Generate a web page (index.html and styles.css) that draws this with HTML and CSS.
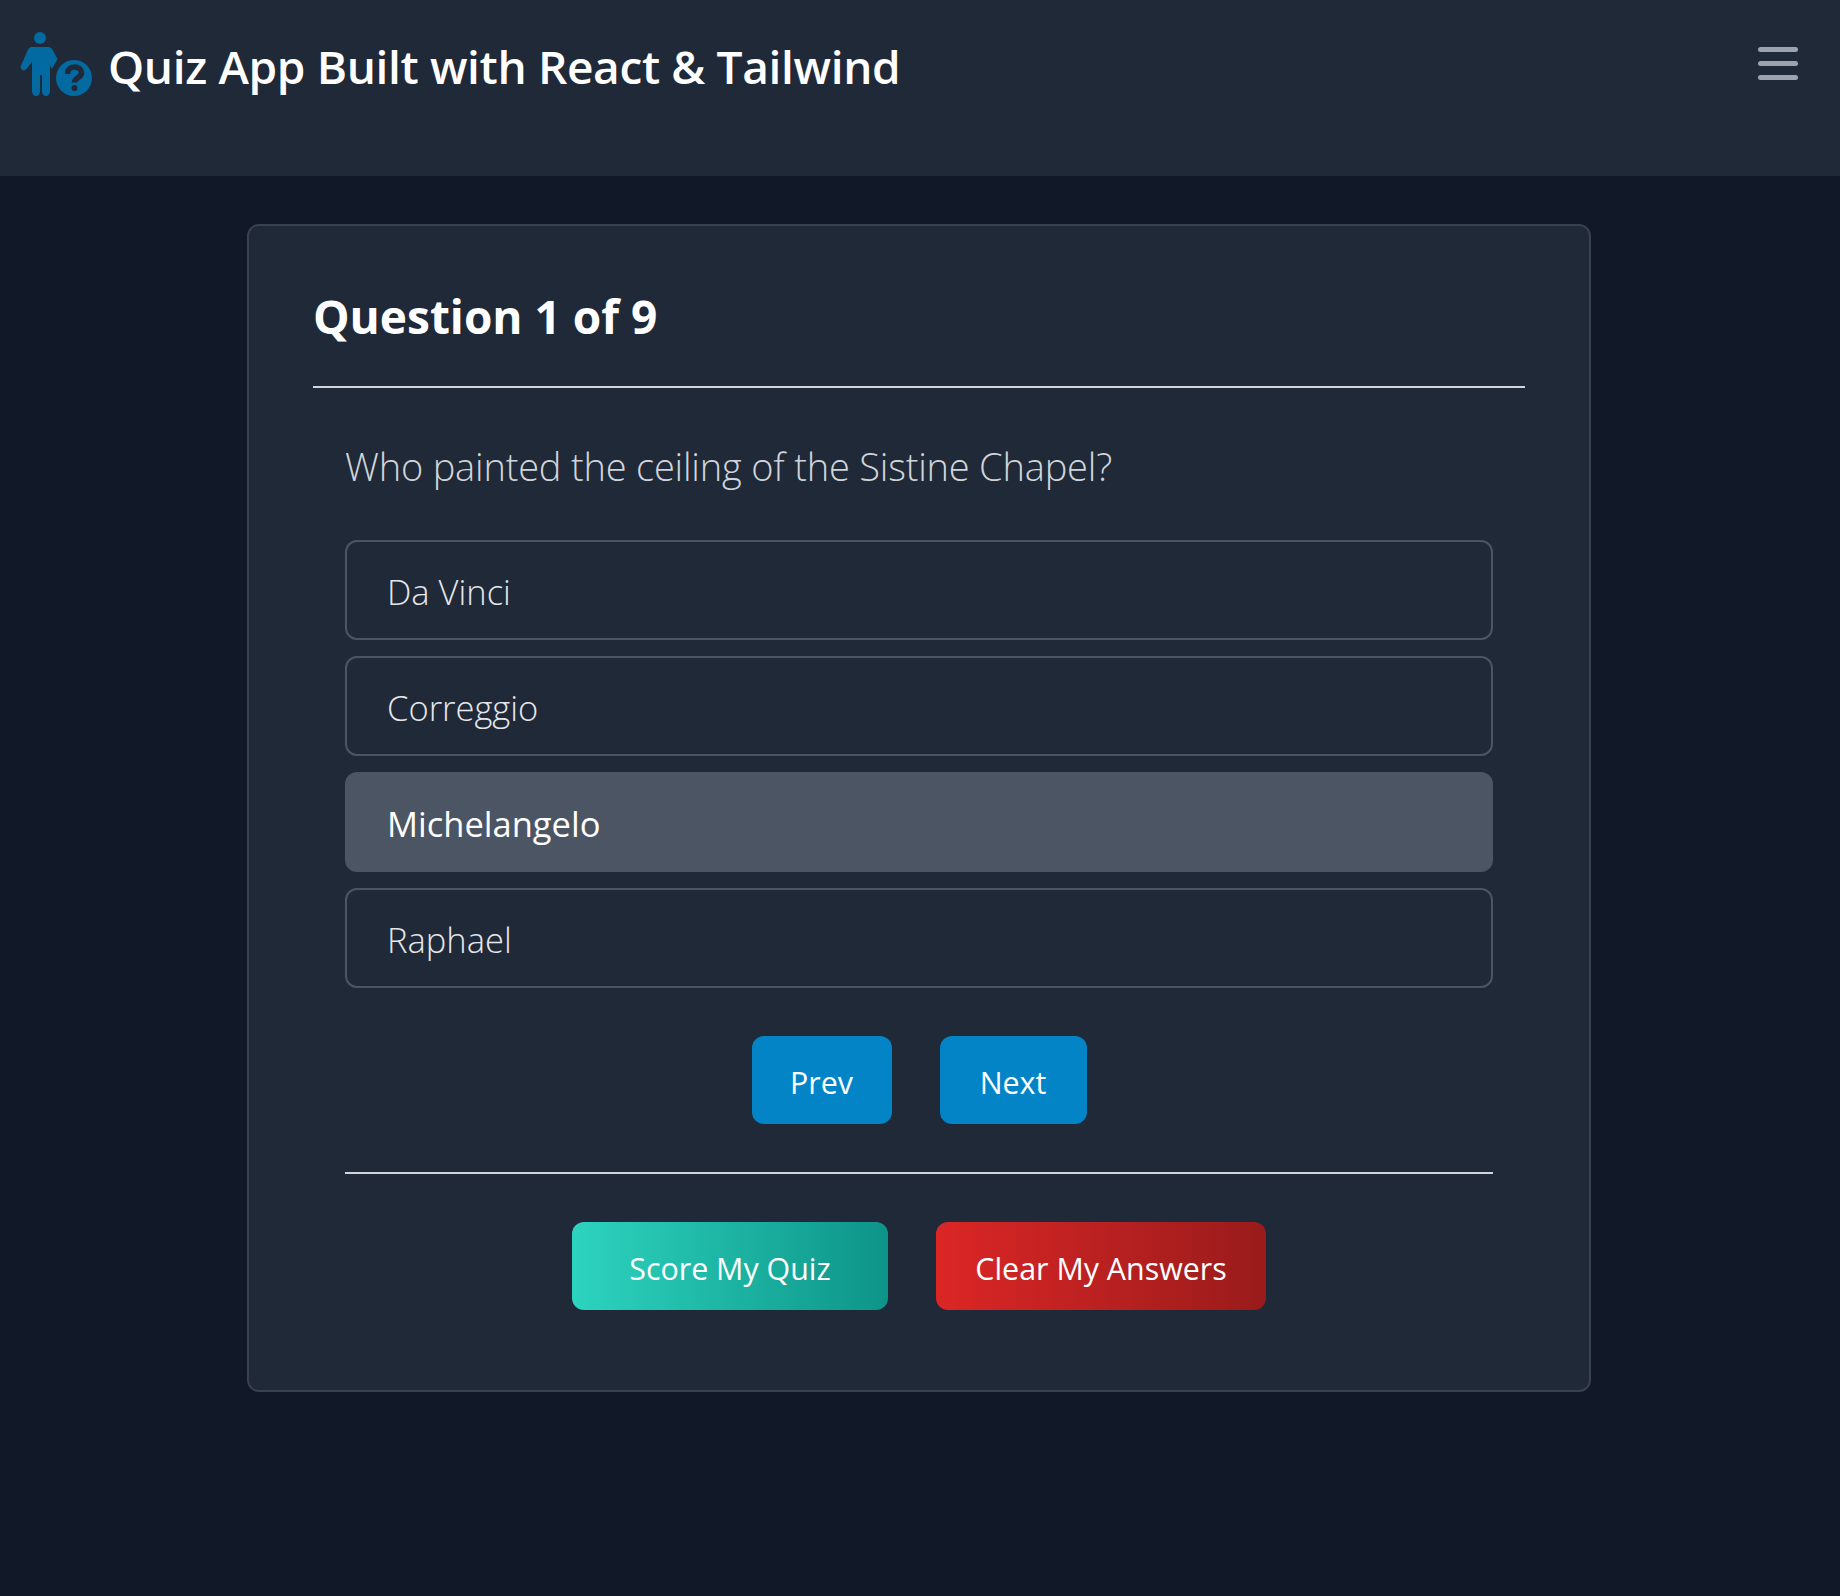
FILE: index.html
```html
<!DOCTYPE html>
<html lang="en">
<head>
<meta charset="UTF-8" />
<meta name="viewport" content="width=device-width, initial-scale=1" />
<title>Quiz App Built with React &amp; Tailwind</title>
<link rel="stylesheet" href="styles.css">
</head>
<body>

<header class="topbar">
  <div class="brand">
    <svg class="brand-icon" viewBox="0 0 74 64" aria-hidden="true">
      <circle cx="20" cy="6" r="6" />
      <path d="M12 15h16c2 0 3.500 1 4.500 2.500l5 9.500-5.500 10-2-3.500v26c0 2.500-1.800 4.500-4 4.500s-4-2-4-4.500V43h-2v16.500c0 2.500-1.800 4.500-4 4.500s-4-2-4-4.500V30l-5.500 7c-1.200 1.500-3 1.800-4.500.8s-1.800-3-.8-4.500L8 17.500C9 16 10.500 15 12 15z" />
      <circle cx="54" cy="46" r="18" />
      <path class="brand-mark" d="M47.500 42c0-4.500 3-7 7-7s7 2.500 7 6c0 5-7 4.500-7 9.500" />
      <circle class="brand-dot" cx="54.500" cy="56" r="3" />
    </svg>
    <h1>Quiz App Built with React &amp; Tailwind</h1>
  </div>
  <button class="menu-btn" aria-label="Menu">
    <span></span><span></span><span></span>
  </button>
</header>

<main class="quiz">
  <h2>Question 1 of 9</h2>
  <hr class="rule" />
  <section class="question-block">
    <p class="question">Who painted the ceiling of the Sistine Chapel?</p>
    <ul class="options">
      <li class="option">Da Vinci</li>
      <li class="option">Correggio</li>
      <li class="option selected">Michelangelo</li>
      <li class="option">Raphael</li>
    </ul>
    <div class="actions">
      <button class="btn btn-nav btn-prev">Prev</button>
      <button class="btn btn-nav btn-next">Next</button>
    </div>
    <hr class="rule" />
    <div class="actions actions-bottom">
      <button class="btn btn-score">Score My Quiz</button>
      <button class="btn btn-clear">Clear My Answers</button>
    </div>
  </section>
</main>

</body>
</html>
```

FILE: styles.css
```css
* {
  box-sizing: border-box;
}
body {
  margin: 0;
  min-height: 100vh;
  background: #111827;
  color: #fff;
  font-family: "Open Sans", "Noto Sans", sans-serif;
}
.topbar {
  height: 176px;
  background: #1f2937;
  padding: 29px 42px 0 20px;
  display: flex;
  justify-content: space-between;
  align-items: flex-start;
}
.brand {
  display: flex;
  align-items: center;
  gap: 14px;
}
.brand-icon {
  width: 74px;
  height: 64px;
  fill: #0369a1;
}
.brand-mark {
  fill: none;
  stroke: #1f2937;
  stroke-width: 5.5;
}
.brand .brand-dot {
  fill: #1f2937;
}
h1 {
  margin: 0;
  font-size: 46px;
  font-weight: 600;
  line-height: 70px;
  letter-spacing: -0.35px;
  position: relative;
  top: 2px;
}
.menu-btn {
  width: 40px;
  margin-top: 18px;
  padding: 0;
  background: none;
  border: none;
  display: flex;
  flex-direction: column;
  gap: 9px;
  cursor: pointer;
}
.menu-btn span {
  display: block;
  height: 5px;
  border-radius: 2.5px;
  background: #9ca3af;
}
.quiz {
  width: 1344px;
  height: 1168px;
  margin: 48px 0 0 247px;
  padding: 60px 64px 0;
  background: #1f2937;
  border: 2px solid #374151;
  border-radius: 12px;
}
h2 {
  margin: 0 0 40px;
  font-size: 46px;
  font-weight: 700;
  line-height: 60px;
}
.rule {
  margin: 0;
  border: none;
  height: 2px;
  background: #d1d5db;
}
.question-block {
  padding: 0 32px;
}
.question {
  margin: 0;
  padding-top: 50px;
  font-size: 38px;
  font-weight: 300;
  line-height: 56px;
  letter-spacing: -0.2px;
  color: #d1d5db;
}
.options {
  list-style: none;
  margin: 46px 0 0;
  padding: 0;
  display: flex;
  flex-direction: column;
  gap: 16px;
}
.option {
  height: 100px;
  padding: 3px 40px 0;
  display: flex;
  align-items: center;
  border: 2px solid #4b5563;
  border-radius: 12px;
  font-size: 34.5px;
  font-weight: 300;
  color: #e5e7eb;
}
.option.selected {
  background: #4b5563;
  color: #fff;
  font-weight: 400;
}
.actions {
  display: flex;
  justify-content: center;
  gap: 48px;
  margin: 48px 0;
}
.actions-bottom {
  margin-bottom: 0;
}
.btn {
  height: 88px;
  padding: 5px 0 0;
  border: none;
  border-radius: 12px;
  color: #fff;
  font-family: inherit;
  font-size: 30.400px;
  cursor: pointer;
}
.btn-nav {
  background: #0284c7;
}
.btn-prev {
  width: 140px;
}
.btn-next {
  width: 147px;
}
.btn-score {
  width: 316px;
  background: linear-gradient(to right, #2dd4bf, #0d9488);
}
.btn-clear {
  width: 330px;
  background: linear-gradient(to right, #dc2626, #991b1b);
}
```
